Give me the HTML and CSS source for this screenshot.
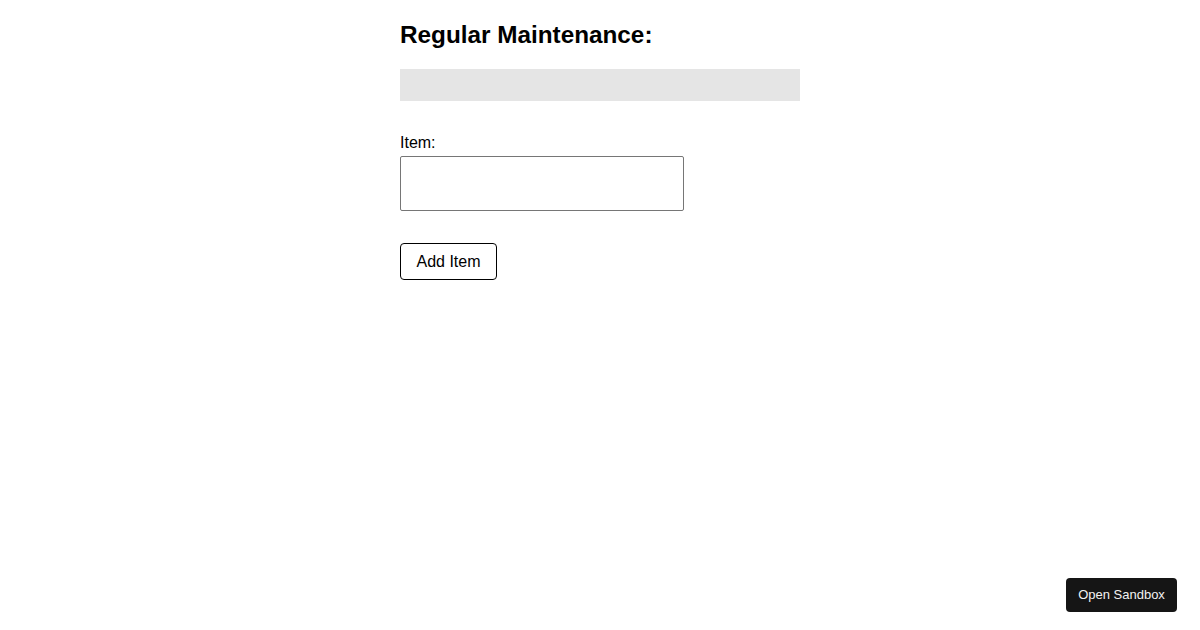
FILE: index.html
```html
<!DOCTYPE html>
<html>
<head>
<meta charset="utf-8">
<link rel="stylesheet" href="styles.css">
</head>
<body>
<main class="page">
  <h2 class="title">Regular Maintenance:</h2>
  <div class="bar"></div>
  <form class="form">
    <label class="label" for="item">Item:</label>
    <input class="input" id="item" type="text">
    <button class="add" type="button">Add Item</button>
  </form>
</main>
<button class="sandbox" type="button">Open Sandbox</button>
</body>
</html>
```
FILE: styles.css
```css
html, body {
  margin: 0;
  padding: 0;
  background: #fff;
  font-family: "Liberation Sans", Arial, sans-serif;
  color: #000;
}
.page {
  width: 400px;
  margin: 0 auto;
  padding-top: 20px;
  display: flex;
  flex-direction: column;
}
.title {
  margin: 0;
  font-size: 24.3px;
  line-height: 29px;
  font-weight: bold;
}
.bar {
  margin-top: 20px;
  height: 32px;
  background: #e5e5e5;
}
.form {
  display: flex;
  flex-direction: column;
  align-items: flex-start;
  margin-top: 33px;
}
.label {
  font-size: 16px;
  line-height: 18px;
}
.input {
  box-sizing: border-box;
  margin-top: 4px;
  width: 284px;
  height: 55px;
  border: 1px solid #767676;
  border-radius: 2px;
  padding: 0 8px;
  font-family: inherit;
  font-size: 16px;
}
.add {
  box-sizing: border-box;
  margin-top: 32px;
  height: 37px;
  width: 97px;
  padding: 0;
  background: #fff;
  border: 1px solid #000;
  border-radius: 4px;
  font-family: inherit;
  font-size: 16px;
  color: #000;
}
.sandbox {
  position: fixed;
  right: 23px;
  bottom: 18px;
  height: 34px;
  width: 111px;
  padding: 0;
  background: #151515;
  color: #f2f2f2;
  border: none;
  border-radius: 4px;
  font-family: inherit;
  font-size: 13px;
  line-height: 32px;
}
```
